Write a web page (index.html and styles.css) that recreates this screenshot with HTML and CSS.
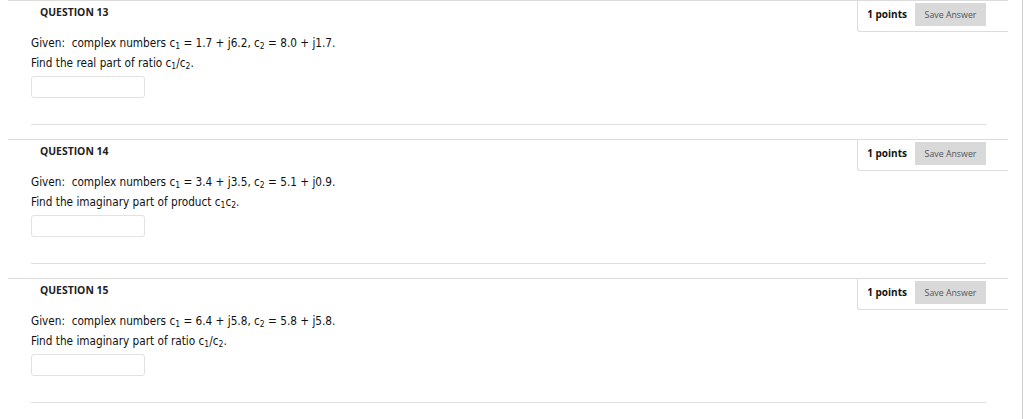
FILE: index.html
```html
<!DOCTYPE html>
<html>
<head>
<meta charset="utf-8">
<link rel="stylesheet" href="styles.css">
</head>
<body>
<div class="page">
  <div class="question">
    <div class="q-header">
      <h3 class="q-title">QUESTION 13</h3>
      <div class="q-points">
        <span class="points">1 points</span>
        <button class="save-btn">Save Answer</button>
      </div>
    </div>
    <div class="q-body">
      <p class="q-line">Given:&nbsp;&nbsp;complex numbers c<sub>1</sub> = 1.7 + j6.2, c<sub>2</sub> = 8.0 + j1.7.</p>
      <p class="q-line">Find the real part of ratio c<sub>1</sub>/c<sub>2</sub>.</p>
      <input class="answer" type="text">
      <div class="q-rule"></div>
    </div>
  </div>
  <div class="question">
    <div class="q-header">
      <h3 class="q-title">QUESTION 14</h3>
      <div class="q-points">
        <span class="points">1 points</span>
        <button class="save-btn">Save Answer</button>
      </div>
    </div>
    <div class="q-body">
      <p class="q-line">Given:&nbsp;&nbsp;complex numbers c<sub>1</sub> = 3.4 + j3.5, c<sub>2</sub> = 5.1 + j0.9.</p>
      <p class="q-line">Find the imaginary part of product c<sub>1</sub>c<sub>2</sub>.</p>
      <input class="answer" type="text">
      <div class="q-rule"></div>
    </div>
  </div>
  <div class="question">
    <div class="q-header">
      <h3 class="q-title">QUESTION 15</h3>
      <div class="q-points">
        <span class="points">1 points</span>
        <button class="save-btn">Save Answer</button>
      </div>
    </div>
    <div class="q-body">
      <p class="q-line">Given:&nbsp;&nbsp;complex numbers c<sub>1</sub> = 6.4 + j5.8, c<sub>2</sub> = 5.8 + j5.8.</p>
      <p class="q-line">Find the imaginary part of ratio c<sub>1</sub>/c<sub>2</sub>.</p>
      <input class="answer" type="text">
      <div class="q-rule"></div>
    </div>
  </div>
</div>
</body>
</html>
```
FILE: styles.css
```css
html, body {
  margin: 0;
  padding: 0;
  background: #fff;
}
.page {
  width: 1022px;
  height: 419px;
  border-right: 1px solid #cfcfcf;
  overflow: hidden;
}
.question {
  margin-left: 8px;
  width: 1000px;
  border-top: 1px solid #dcdcdc;
  height: 138px;
}
.q-header {
  display: flex;
  justify-content: space-between;
  align-items: flex-start;
  height: 30px;
}
.q-title {
  margin: 0;
  padding-left: 32px;
  font-family: "Open Sans", sans-serif;
  font-weight: 700;
  font-size: 10.4px;
  line-height: 23px;
  color: #222;
}
.q-points {
  display: flex;
  align-items: flex-start;
  gap: 8px;
  padding: 2px 22px 0 9px;
  box-sizing: border-box;
  border-left: 1px solid #dcdcdc;
  border-bottom: 1px solid #dcdcdc;
  border-bottom-left-radius: 3px;
  height: 31px;
}
.points {
  font-family: "Open Sans", sans-serif;
  font-weight: 700;
  font-size: 10px;
  line-height: 23px;
  color: #111;
}
.save-btn {
  width: 71px;
  height: 23px;
  border: none;
  background: #d9d9d9;
  font-family: "Open Sans", sans-serif;
  font-size: 8.8px;
  color: #555;
  padding: 0;
}
.q-body {
  padding: 2px 22px 0 23px;
}
.q-line {
  margin: 0;
  font-family: "DejaVu Sans Condensed", "DejaVu Sans", sans-serif;
  font-size: 11.7px;
  line-height: 20px;
  color: #111;
}
.q-line sub {
  font-size: 8.5px;
  vertical-align: -2px;
  line-height: 0;
}
.answer {
  display: block;
  margin-top: 3px;
  width: 114px;
  height: 22px;
  box-sizing: border-box;
  border: 1px solid #e2e2e2;
  border-radius: 3px;
  background: #fff;
}
.q-rule {
  margin-top: 26px;
  height: 1px;
  background: #dedede;
}
```
